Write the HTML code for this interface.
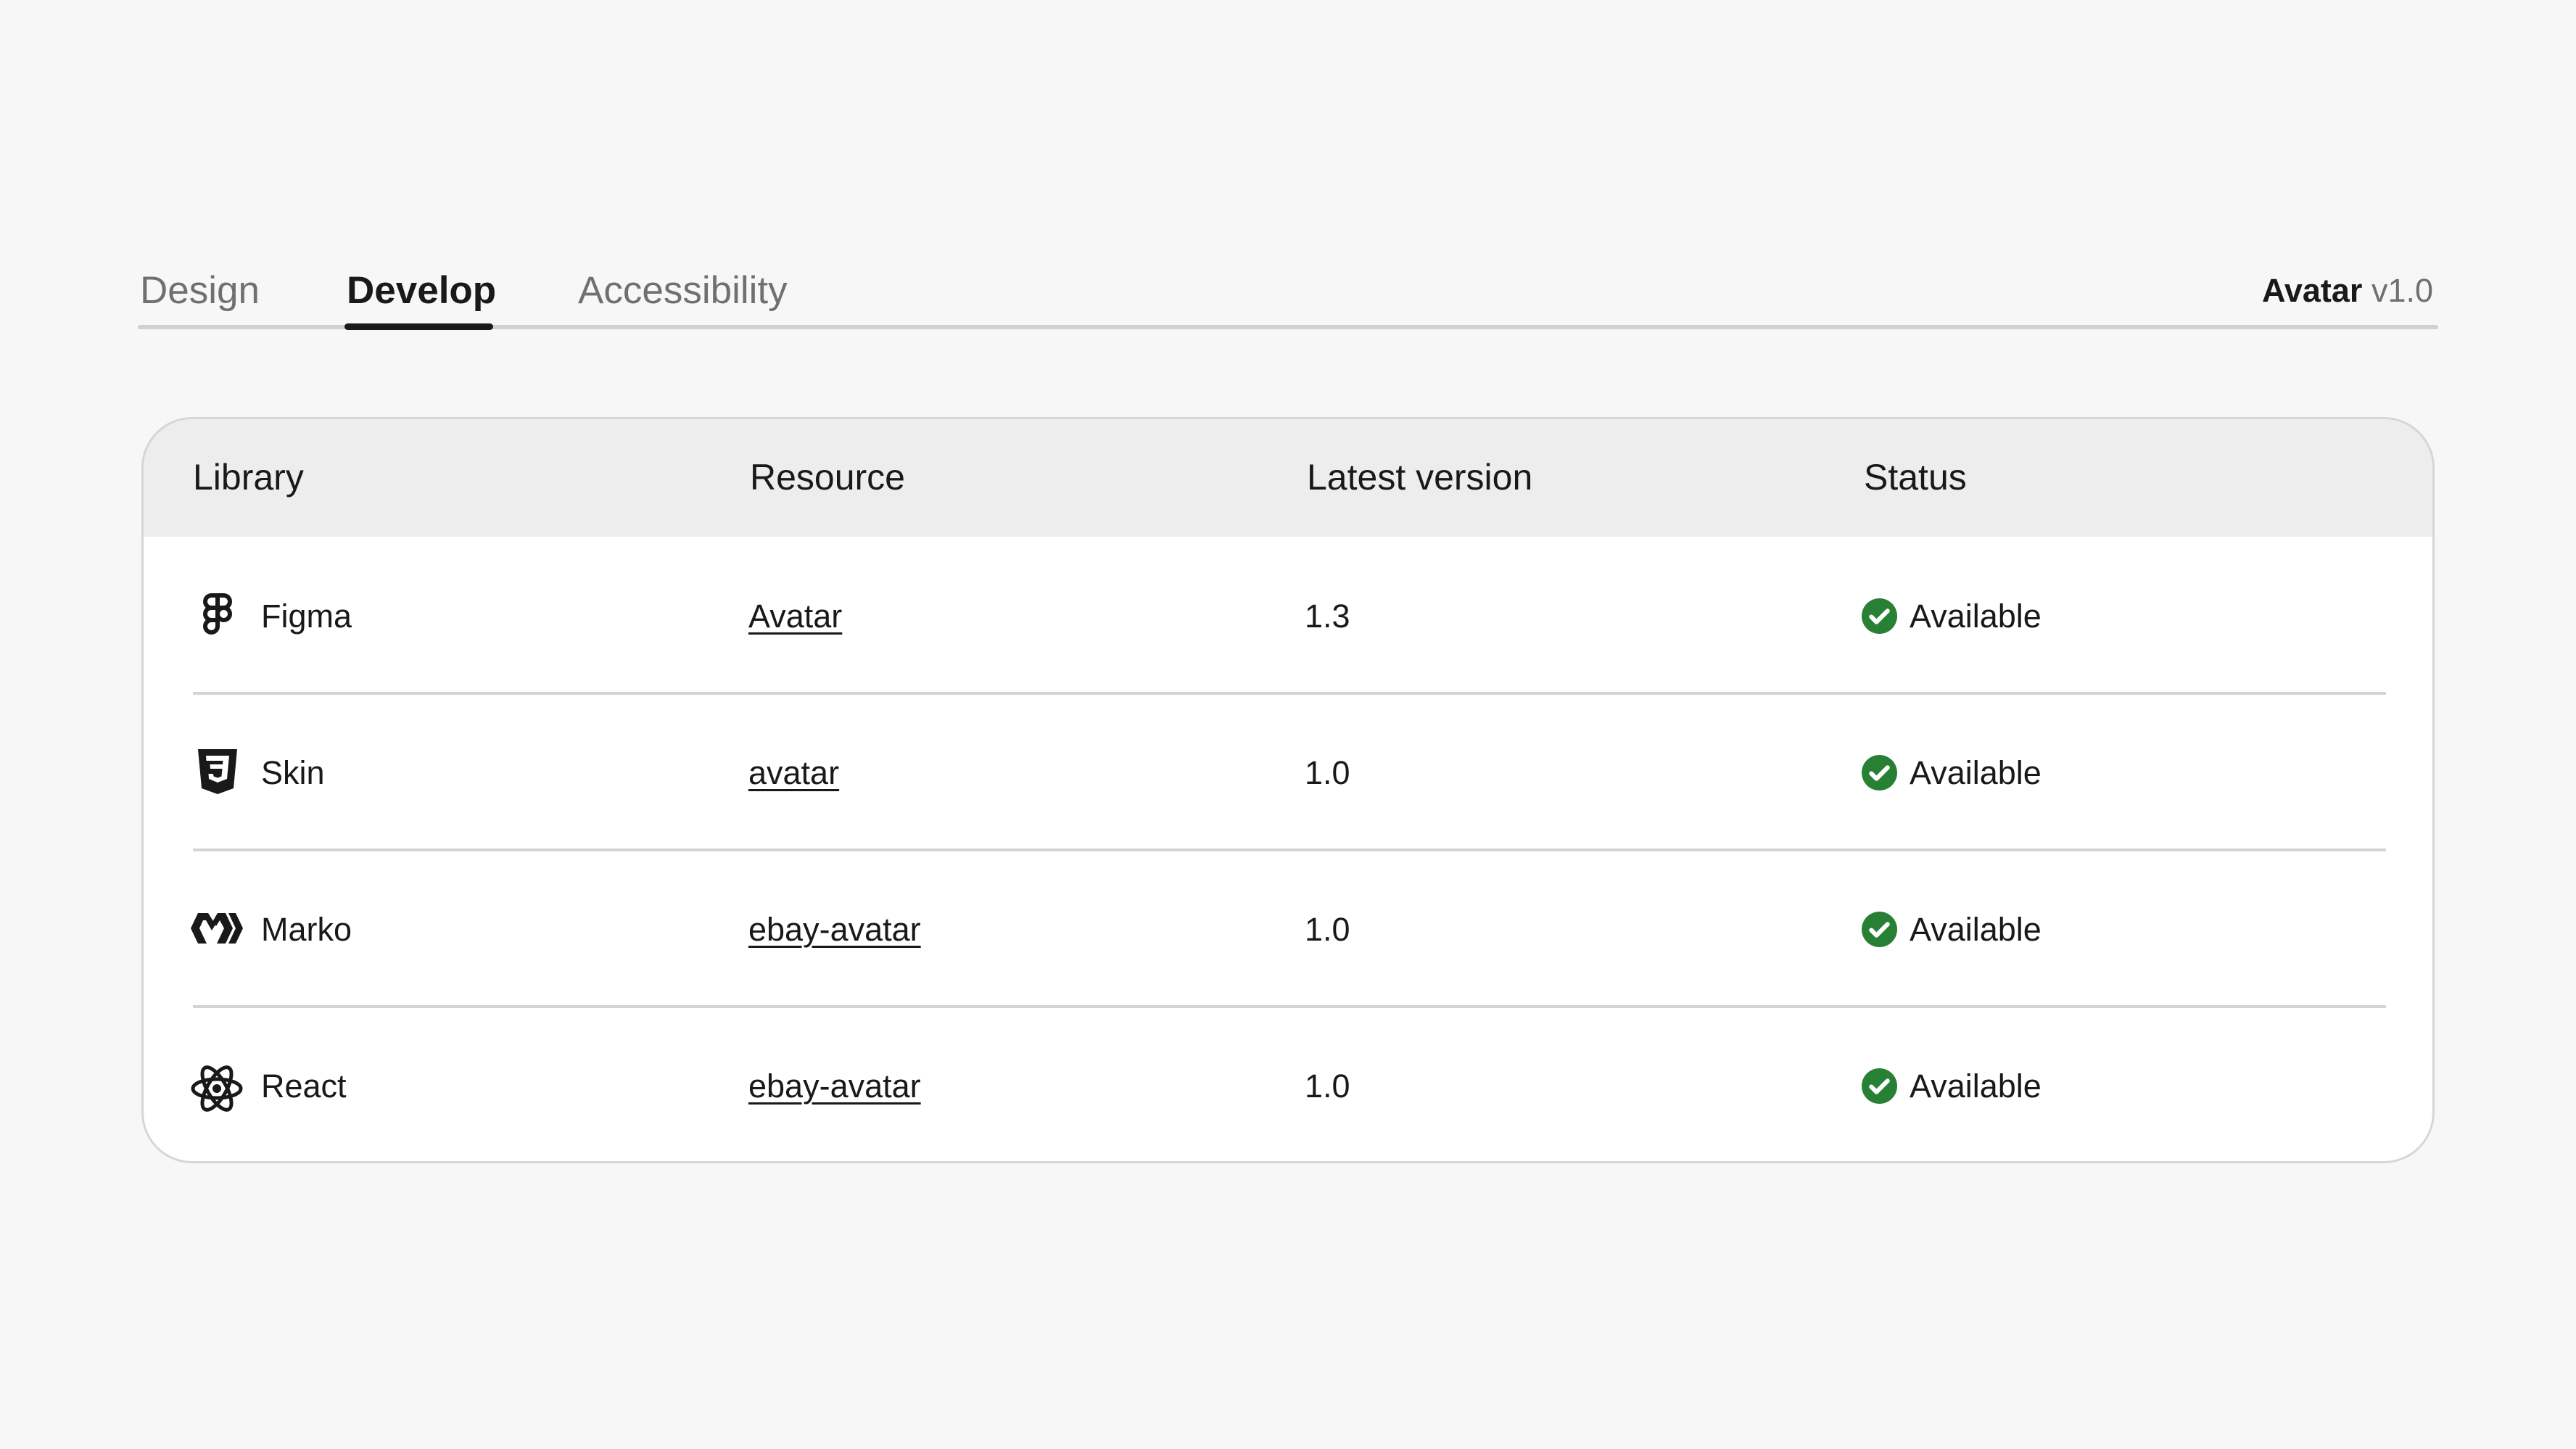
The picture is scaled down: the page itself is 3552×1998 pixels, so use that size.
<!DOCTYPE html>
<html><head><meta charset="utf-8"><style>
*{margin:0;padding:0;box-sizing:border-box}
html,body{width:3552px;height:1998px;background:#f7f7f7;font-family:"Liberation Sans",sans-serif;color:#191919;overflow:hidden;position:relative}
.abs{position:absolute;white-space:nowrap}
.tab{font-size:53px;top:374px;color:#707070}
.t{line-height:1}
.card{position:absolute;left:195px;top:575px;width:3162px;height:1029px;border:3px solid #d6d6d6;border-radius:70px;background:#fff;overflow:hidden}
.hdr{position:absolute;left:0;top:0;width:100%;height:162px;background:#ededed}
.h{font-size:50px;top:55px}
.cell{font-size:45px}
.div{position:absolute;left:68px;width:3024px;height:4px;background:#d4d4d4}
a{color:#191919;text-decoration:underline;text-decoration-thickness:3px;text-underline-offset:7px}
</style></head><body>
<div class="abs tab t" style="left:193px">Design</div>
<div class="abs tab t" style="left:478px;color:#191919;font-weight:bold">Develop</div>
<div class="abs tab t" style="left:797px">Accessibility</div>
<div class="abs" style="left:190px;top:448px;width:3172px;height:6px;background:#d1d1d1;border-radius:3px"></div>
<div class="abs" style="left:475px;top:446px;width:205px;height:9px;background:#191919;border-radius:5px"></div>
<div class="abs t" style="right:197px;top:378px;font-size:45px"><b>Avatar</b> <span style="color:#707070">v1.0</span></div>

<div class="card">
<div class="hdr"></div>
<div class="abs h t" style="left:68px">Library</div>
<div class="abs h t" style="left:836px">Resource</div>
<div class="abs h t" style="left:1604px">Latest version</div>
<div class="abs h t" style="left:2372px">Status</div>
<div class="div" style="top:376px"></div>
<div class="div" style="top:592px"></div>
<div class="div" style="top:808px"></div>
</div>

<svg class="abs" style="left:280px;top:818px" width="40" height="60" viewBox="0 0 40 60" fill="none" stroke="#191919" stroke-width="6">
<path d="M20 3H11.5a8.5 8.5 0 0 0 0 17H20Z M20 3h8.5a8.5 8.5 0 0 1 0 17H20Z M20 20H11.5a8.5 8.5 0 0 0 0 17H20Z M20 37H11.5a8.5 8.5 0 1 0 8.5 8.5Z"/>
<circle cx="28.5" cy="28.5" r="8.5"/>
</svg>
<svg class="abs" style="left:273px;top:1033px" width="54" height="62" viewBox="0 0 54 62">
<path d="M0 0H54L49 54L27 62L5 54Z" fill="#191919"/>
<path d="M11 9H43L40 41L27 46L15 41L14.5 34H21L21.5 37.5L27 39.5L32.5 37.5L33.5 27H17L16.5 21H34L34.5 16H11.5Z" fill="#fff"/>
</svg>
<svg class="abs" style="left:263px;top:1259px" width="72" height="42" viewBox="0 0 72 42" fill="#191919">
<path d="M0 21L10 0H24L34 16L29 24L21 10H17L12 21L22 42H10Z"/>
<path d="M30 12L37 0H48L58 21L48 42H36L46 21L40 10L35 18Z"/>
<path d="M52 0H62L72 21L62 42H52L62 21Z"/>
</svg>
<svg class="abs" style="left:262px;top:1462px" width="74" height="78" viewBox="0 0 74 78" fill="none" stroke="#191919" stroke-width="5">
<ellipse cx="37" cy="39" rx="33" ry="13"/>
<ellipse cx="37" cy="39" rx="33" ry="13" transform="rotate(60 37 39)"/>
<ellipse cx="37" cy="39" rx="33" ry="13" transform="rotate(-60 37 39)"/>
<circle cx="37" cy="39" r="6" fill="#191919" stroke="none"/>
</svg>

<div class="abs cell t" style="left:360px;top:827px">Figma</div>
<div class="abs cell t" style="left:360px;top:1043px">Skin</div>
<div class="abs cell t" style="left:360px;top:1259px">Marko</div>
<div class="abs cell t" style="left:360px;top:1475px">React</div>

<div class="abs cell t" style="left:1032px;top:827px"><a>Avatar</a></div>
<div class="abs cell t" style="left:1032px;top:1043px"><a>avatar</a></div>
<div class="abs cell t" style="left:1032px;top:1259px"><a>ebay-avatar</a></div>
<div class="abs cell t" style="left:1032px;top:1475px"><a>ebay-avatar</a></div>

<div class="abs cell t" style="left:1799px;top:827px">1.3</div>
<div class="abs cell t" style="left:1799px;top:1043px">1.0</div>
<div class="abs cell t" style="left:1799px;top:1259px">1.0</div>
<div class="abs cell t" style="left:1799px;top:1475px">1.0</div>

<svg class="abs" style="left:2567px;top:825px" width="49" height="49" viewBox="0 0 48 48"><circle cx="24" cy="24" r="24" fill="#288035"/><path d="M13 25l7 7 15-15" fill="none" stroke="#fff" stroke-width="6" stroke-linecap="round" stroke-linejoin="round"/></svg>
<svg class="abs" style="left:2567px;top:1041px" width="49" height="49" viewBox="0 0 48 48"><circle cx="24" cy="24" r="24" fill="#288035"/><path d="M13 25l7 7 15-15" fill="none" stroke="#fff" stroke-width="6" stroke-linecap="round" stroke-linejoin="round"/></svg>
<svg class="abs" style="left:2567px;top:1257px" width="49" height="49" viewBox="0 0 48 48"><circle cx="24" cy="24" r="24" fill="#288035"/><path d="M13 25l7 7 15-15" fill="none" stroke="#fff" stroke-width="6" stroke-linecap="round" stroke-linejoin="round"/></svg>
<svg class="abs" style="left:2567px;top:1473px" width="49" height="49" viewBox="0 0 48 48"><circle cx="24" cy="24" r="24" fill="#288035"/><path d="M13 25l7 7 15-15" fill="none" stroke="#fff" stroke-width="6" stroke-linecap="round" stroke-linejoin="round"/></svg>

<div class="abs cell t" style="left:2633px;top:827px">Available</div>
<div class="abs cell t" style="left:2633px;top:1043px">Available</div>
<div class="abs cell t" style="left:2633px;top:1259px">Available</div>
<div class="abs cell t" style="left:2633px;top:1475px">Available</div>
</body></html>
